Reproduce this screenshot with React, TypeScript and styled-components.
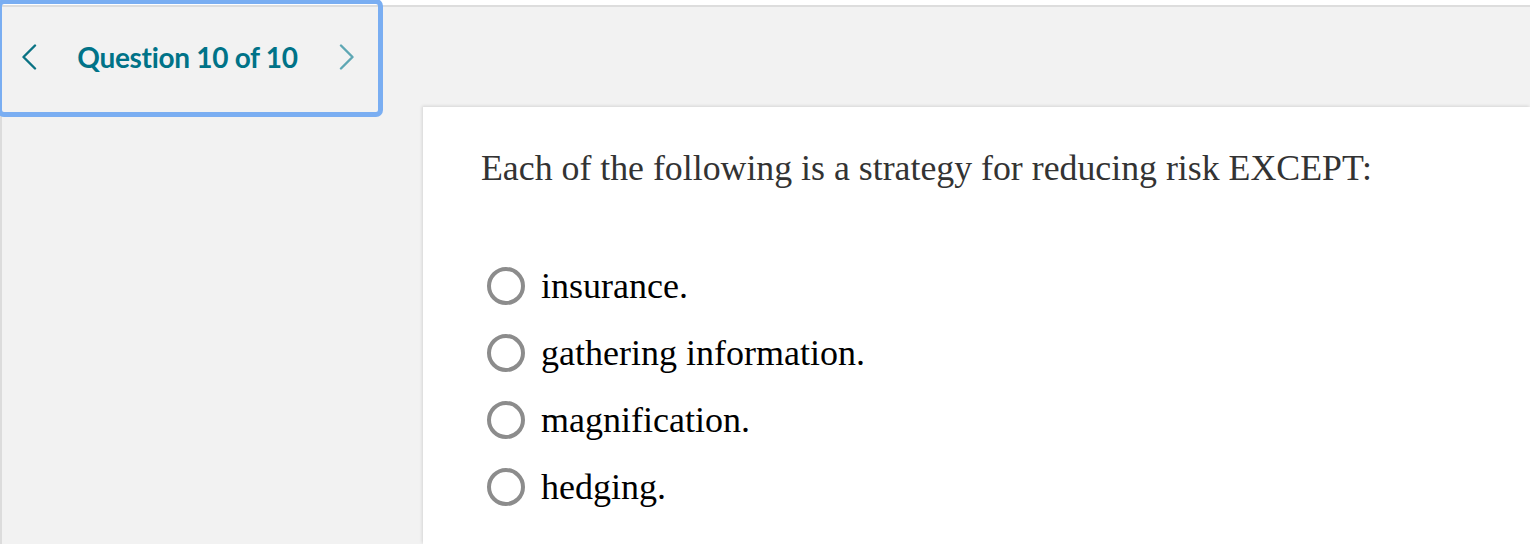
import styled, { createGlobalStyle } from "styled-components";

const GlobalStyle = createGlobalStyle`
  html, body {
    margin: 0;
    padding: 0;
    background: #f2f2f2;
  }
`;

const options = ["insurance.", "gathering information.", "magnification.", "hedging."];

const Chevron: React.FC<{ dir: "left" | "right" }> = ({ dir }) => (
  <svg width="18" height="26" viewBox="0 0 18 26" fill="none">
    <path
      d={dir === "left" ? "M15 1.5 L3.5 13 L15 24.5" : "M3 1.5 L14.5 13 L3 24.5"}
      stroke="currentColor"
      strokeWidth="2.4"
      strokeLinecap="round"
      strokeLinejoin="round"
    />
  </svg>
);

export default function App() {
  return (
    <>
      <GlobalStyle />
      <Page>
        <NavCell>
          <NavBox>
            <NavArrow $muted={false}>
              <Chevron dir="left" />
            </NavArrow>
            <NavTitle>Question 10 of 10</NavTitle>
            <NavArrow $muted>
              <Chevron dir="right" />
            </NavArrow>
          </NavBox>
        </NavCell>
        <Panel>
          <QuestionText>Each of the following is a strategy for reducing risk EXCEPT:</QuestionText>
          <OptionList>
            {options.map((opt) => (
              <OptionRow key={opt}>
                <Radio />
                <OptionLabel>{opt}</OptionLabel>
              </OptionRow>
            ))}
          </OptionList>
        </Panel>
      </Page>
    </>
  );
}

const Page = styled.div`
  display: grid;
  grid-template-columns: 423px 1fr;
  grid-template-rows: 107px 1fr;
  height: 544px;
  overflow: hidden;
  background:
    linear-gradient(to right, #dcdcdc 0 2px, transparent 2px) 0 7px / 100% 100% no-repeat,
    linear-gradient(to bottom, #ffffff 0 5px, #dddddd 5px 7px, #f2f2f2 7px);
`;

const NavCell = styled.div`
  grid-column: 1;
  grid-row: 1;
  position: relative;
  z-index: 1;
`;

const NavBox = styled.div`
  box-sizing: border-box;
  margin: 4px 0 0 2px;
  width: 376px;
  height: 108px;
  display: flex;
  align-items: center;
  padding: 0 22px 0 18px;
  outline: 5px solid #7aaef2;
  border-radius: 2px;
  color: #007a8c;
`;

const NavArrow = styled.div<{ $muted: boolean }>`
  display: flex;
  align-items: center;
  color: ${(p) => (p.$muted ? "#5ea7b4" : "#0a7384")};
  margin-top: -2px;
`;

const NavTitle = styled.div`
  flex: 1;
  text-align: center;
  font-family: Lato, "Noto Sans", sans-serif;
  font-weight: 700;
  font-size: 28px;
  letter-spacing: -0.3px;
  color: #007388;
  padding-right: 1px;
  margin-top: -2px;
`;

const Panel = styled.div`
  grid-column: 2;
  grid-row: 2;
  background: #ffffff;
  box-shadow: -1px -1px 3px rgba(0, 0, 0, 0.12);
  padding: 41px 0 0 58px;
`;

const QuestionText = styled.div`
  font-family: "Liberation Serif", "Times New Roman", serif;
  font-size: 35.8px;
  line-height: 40px;
  color: #333333;
`;

const OptionList = styled.div`
  margin-top: 64px;
  display: flex;
  flex-direction: column;
`;

const OptionRow = styled.div`
  display: flex;
  align-items: center;
  height: 67px;
  padding-left: 6px;
`;

const Radio = styled.span`
  box-sizing: border-box;
  width: 38px;
  height: 38px;
  border-radius: 50%;
  border: 4px solid #8c8c8c;
  background: #fff;
  flex-shrink: 0;
`;

const OptionLabel = styled.span`
  margin-left: 16px;
  font-family: "Liberation Serif", "Times New Roman", serif;
  font-size: 36px;
  line-height: 40px;
  color: #000;
`;
